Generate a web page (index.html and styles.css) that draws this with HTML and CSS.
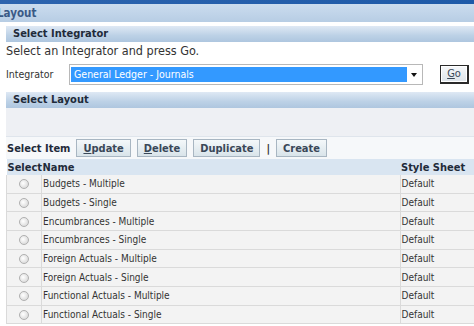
FILE: index.html
```html
<!DOCTYPE html>
<html lang="en">
<head>
    <meta charset="UTF-8">
    <title>Layout</title>
    <link rel="stylesheet" href="styles.css">
</head>
<body>
    <div class="topbar"></div>
    <div class="page-title">Layout</div>

    <div class="content">
        <div class="section-head">Select Integrator</div>
        <p class="hint">Select an Integrator and press Go.</p>
        <div class="form-row">
            <span class="label">Integrator</span>
            <div class="select">
                <span class="select-value">General Ledger - Journals</span>
                <span class="select-arrow"></span>
            </div>
            <button class="go-btn"><u>G</u>o</button>
        </div>

        <div class="section-head">Select Layout</div>
        <div class="filler"></div>

        <div class="toolbar">
            <span class="toolbar-label">Select Item</span>
            <button class="tb-btn"><u>U</u>pdate</button>
            <button class="tb-btn"><u>D</u>elete</button>
            <button class="tb-btn">Duplicate</button>
            <span class="sep">|</span>
            <button class="tb-btn">Create</button>
        </div>

        <table class="grid">
            <thead>
                <tr>
                    <th class="col-sel">Select</th>
                    <th class="col-name">Name</th>
                    <th class="col-style">Style Sheet</th>
                </tr>
            </thead>
            <tbody>
                <tr><td class="col-sel"><span class="radio"></span></td><td>Budgets - Multiple</td><td class="col-style">Default</td></tr>
                <tr><td class="col-sel"><span class="radio"></span></td><td>Budgets - Single</td><td class="col-style">Default</td></tr>
                <tr><td class="col-sel"><span class="radio"></span></td><td>Encumbrances - Multiple</td><td class="col-style">Default</td></tr>
                <tr><td class="col-sel"><span class="radio"></span></td><td>Encumbrances - Single</td><td class="col-style">Default</td></tr>
                <tr><td class="col-sel"><span class="radio"></span></td><td>Foreign Actuals - Multiple</td><td class="col-style">Default</td></tr>
                <tr><td class="col-sel"><span class="radio"></span></td><td>Foreign Actuals - Single</td><td class="col-style">Default</td></tr>
                <tr><td class="col-sel"><span class="radio"></span></td><td>Functional Actuals - Multiple</td><td class="col-style">Default</td></tr>
                <tr><td class="col-sel"><span class="radio"></span></td><td>Functional Actuals - Single</td><td class="col-style">Default</td></tr>
            </tbody>
        </table>
    </div>
</body>
</html>
```

FILE: styles.css
```css
body {
    margin: 0;
    padding: 0;
    background-color: #ffffff;
    font-family: "DejaVu Sans Condensed", "DejaVu Sans", sans-serif;
    font-size: 11px;
    color: #333333;
    overflow: hidden;
}

.topbar {
    height: 4px;
    background: linear-gradient(to right, #2d64ae, #1e5aa8);
}

.page-title {
    height: 18px;
    line-height: 18px;
    background: linear-gradient(#cbdcee, #b7cde4);
    color: #3a5a86;
    font-weight: bold;
    font-size: 11.5px;
    text-indent: -3px;
}

.content {
    padding-left: 6px;
    padding-top: 4px;
}

.section-head {
    height: 16px;
    line-height: 16px;
    padding-left: 7px;
    background: linear-gradient(#dfe9f4, #bcd1e6 60%, #aec6df);
    color: #1f2b3a;
    font-weight: bold;
    font-size: 11px;
}

.hint {
    margin: 0;
    height: 18px;
    line-height: 18px;
    font-size: 12.5px;
}

.form-row {
    display: flex;
    align-items: center;
    height: 28px;
    margin-bottom: 4px;
}

.label {
    width: 63px;
    font-size: 10.5px;
}

.select {
    display: flex;
    align-items: center;
    width: 350px;
    height: 17px;
    border: 1px solid #b8b8b8;
    background-color: #ffffff;
    padding: 1px;
}

.select-value {
    flex: 1;
    height: 15px;
    line-height: 15px;
    padding-left: 3px;
    background-color: #3399ff;
    color: #ffffff;
    font-size: 10.5px;
}

.select-arrow {
    width: 14px;
    height: 15px;
    position: relative;
}

.select-arrow::after {
    content: "";
    position: absolute;
    left: 4px;
    top: 6px;
    border-left: 3px solid transparent;
    border-right: 3px solid transparent;
    border-top: 4px solid #111111;
}

.go-btn {
    margin-left: 17px;
    width: 29px;
    height: 19px;
    padding: 0;
    border: 1px solid #2a2a2a;
    border-right-width: 2px;
    border-bottom-width: 2px;
    box-shadow: inset 0 0 0 1px #ffffff;
    background: linear-gradient(#f6f8fa, #dde4ea);
    font-family: "DejaVu Sans Condensed", "DejaVu Sans", sans-serif;
    font-size: 11px;
    color: #3a4858;
}

.filler {
    height: 28px;
    background-color: #eef0f4;
    border-bottom: 1px solid #dfe5ec;
}

.toolbar {
    display: flex;
    align-items: center;
    gap: 6px;
    height: 22px;
    background-color: #f6f8fa;
}

.toolbar-label {
    font-weight: bold;
    font-size: 11px;
    color: #1f2b3a;
    padding-left: 1px;
}

.tb-btn {
    height: 18px;
    padding: 0 6px;
    border: 1px solid #a8b6c2;
    background: linear-gradient(#f4f8fa, #d9e4ea);
    font-family: "DejaVu Sans Condensed", "DejaVu Sans", sans-serif;
    font-size: 11px;
    font-weight: bold;
    color: #3a4858;
}

.sep {
    color: #333333;
    font-weight: bold;
}

.grid {
    border-collapse: collapse;
    width: 474px;
    table-layout: fixed;
}

.grid th {
    height: 16px;
    text-align: left;
    background-color: #d9e5f1;
    color: #1f2b3a;
    font-size: 11px;
    padding: 0 1px;
    white-space: nowrap;
}

.grid td {
    height: 17.67px;
    padding: 0 1px;
    background-color: #f3f3f3;
    border-bottom: 1px solid #dadada;
    border-left: 1px solid #dadada;
    font-size: 10px;
    white-space: nowrap;
}

.grid .col-sel {
    width: 33px;
}

.grid td.col-sel {
    text-align: center;
}

.grid .col-style {
    width: 78px;
}

.radio {
    display: inline-block;
    width: 8px;
    height: 8px;
    border: 1px solid #b0b0b0;
    border-radius: 50%;
    background: radial-gradient(circle at 40% 40%, #ffffff, #d0d0d0);
    vertical-align: middle;
}
```
